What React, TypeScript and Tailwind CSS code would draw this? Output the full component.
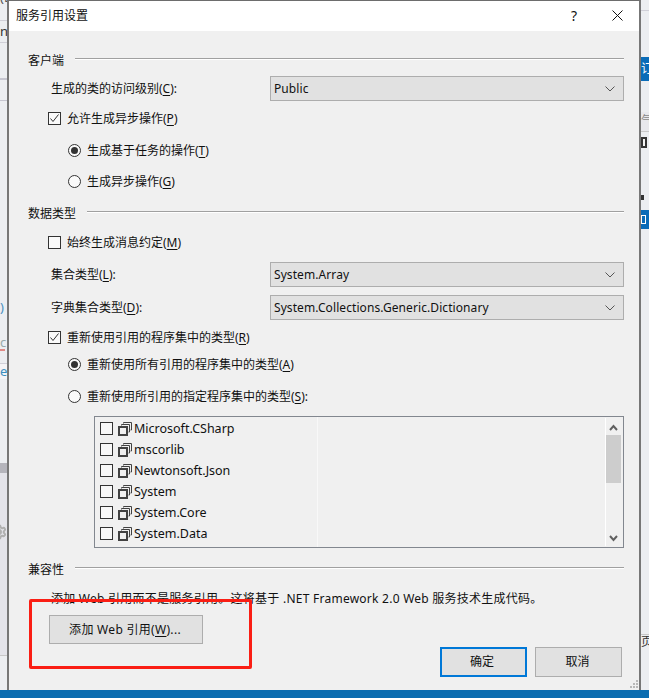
import { Settings } from "lucide-react";

const font = "font-['Noto_Sans','Noto_Sans_CJK_SC',sans-serif]";

function Key({ children }: { children: string }) {
  return <span className="underline underline-offset-2">{children}</span>;
}

function Section({ title, className }: { title: string; className: string }) {
  return (
    <div className={`flex h-5 items-center gap-[11px] ${className}`}>
      <span className="pt-[2px]">{title}</span>
      <div className="mb-[2px] h-[2px] flex-1 border-y border-t-[#a0a0a0] border-b-white" />
    </div>
  );
}

function Check({ checked, className, children }: { checked?: boolean; className: string; children: React.ReactNode }) {
  return (
    <div className={`ml-5 flex h-[21px] items-center gap-[6px] ${className}`}>
      <div className="flex h-[13px] w-[13px] items-center justify-center border border-[#333] bg-[#fafafa]">
        {checked && (
          <svg width="11" height="11" viewBox="0 0 11 11" fill="none" stroke="#333" strokeWidth="1">
            <path d="M1.5 5.5 4 8.5 9.5 1.5" />
          </svg>
        )}
      </div>
      <span>{children}</span>
    </div>
  );
}

function Radio({ checked, className, children }: { checked?: boolean; className: string; children: React.ReactNode }) {
  return (
    <div className={`ml-10 flex h-[21px] items-center gap-[6px] ${className}`}>
      <div className="flex h-[13px] w-[13px] items-center justify-center rounded-full border border-[#333] bg-[#fafafa]">
        {checked && <div className="h-[7px] w-[7px] rounded-full bg-[#333]" />}
      </div>
      <span>{children}</span>
    </div>
  );
}

function Select({ label, value, className }: { label: React.ReactNode; value: string; className: string }) {
  return (
    <div className={`ml-[23px] flex h-[25px] items-center ${className}`}>
      <span className="w-[219px]">{label}</span>
      <div className="flex h-full flex-1 items-center justify-between border border-[#adadad] bg-[#e1e1e1] pl-[3px] pr-2">
        <span className="tracking-[0.08px]">{value}</span>
        <svg width="10" height="6" viewBox="0 0 10 6" fill="none" stroke="#555" strokeWidth="1">
          <path d="M.5 .5 5 5 9.5 .5" />
        </svg>
      </div>
    </div>
  );
}

function Assembly() {
  return (
    <svg width="14" height="14" viewBox="0 0 14 14" fill="none" className="shrink-0">
      <path d="M3.5 3.5V2.5H11.5V10H10.5" stroke="#424242" />
      <path d="M5.5 1.5V.5H13.5V8H12.5" stroke="#424242" />
      <rect x="1" y="5" width="8" height="8" stroke="#424242" strokeWidth="2" />
    </svg>
  );
}

const assemblies = ["Microsoft.CSharp", "mscorlib", "Newtonsoft.Json", "System", "System.Core", "System.Data"];

function AssemblyList() {
  return (
    <div className="ml-[66px] mt-[9px] flex h-[132px] border border-[#82878f]">
      <div className="w-[222px] pt-[1px] text-[12.5px]">
        {assemblies.map((name) => (
          <div key={name} className="flex h-[21px] items-center pl-[5px]">
            <div className="h-[13px] w-[13px] border border-[#333] bg-[#f8f8f8]" />
            <div className="ml-[5px] mr-[2px]">
              <Assembly />
            </div>
            <span className="pt-[2px]">{name}</span>
          </div>
        ))}
      </div>
      <div className="w-px bg-[#f8f8f8]" />
      <div className="flex-1" />
      <Scrollbar />
    </div>
  );
}

function Scrollbar() {
  return (
    <div className="my-[1px] flex w-[18px] flex-col items-center border-l border-white pr-[2px]">
      <svg width="9" height="7" viewBox="0 0 9 7" fill="none" stroke="#606060" strokeWidth="2" className="mt-[6px] mb-[4px]">
        <path d="M1 6 4.5 2 8 6" />
      </svg>
      <div className="h-[48px] w-full bg-[#cdcdcd]" />
      <svg width="9" height="7" viewBox="0 0 9 7" fill="none" stroke="#606060" strokeWidth="2" className="mt-auto mb-[4px]">
        <path d="M1 1 4.5 5 8 1" />
      </svg>
    </div>
  );
}

function LeftEdge() {
  return (
    <div className="flex w-[7px] shrink-0 flex-col overflow-hidden bg-[#eceef1] text-[13px] leading-none text-[#555]">
      <div className="h-[21px] border-b border-[#d0d0d8]">
        <div className="-mt-[9px]">(E</div>
      </div>
      <div className="h-[22px] border-b border-[#d0d0d8] pt-[4px] text-[#333]">n</div>
      <div className="h-[37px] border-b-2 border-[#c6c6d0]" />
      <div className="h-[21px] border-b border-[#c6c6d0]" />
      <div className="mt-[200px] h-[13px] text-[#4a90c0]">)</div>
      <div className="mt-[22px] h-[13px] text-[#9aa]">c</div>
      <div className="h-[2px] w-[5px] bg-[#e08a86]" />
      <div className="mt-[12px] h-[16px] border-t border-[#d0d0d8] bg-[#f4f4f6] pt-px text-[#3a8fc0]">e</div>
      <div className="mt-[84px] h-[10px] bg-[#b5b5bc]" />
      <div className="flex h-[182px] flex-col bg-[#e4e4ea]">
        <Settings size={16} strokeWidth={3} className="ml-[-9px] mt-[51px] text-[#b0b0b0]" />
      </div>
      <div className="flex-1 border-t border-[#c8c8c8]" />
    </div>
  );
}

function RightEdge() {
  return (
    <div className="flex w-[8px] shrink-0 flex-col overflow-hidden bg-[#eceef1] text-[12px] leading-none">
      <div className="h-[11px] border-b border-[#d0d0d8]" />
      <div className="mt-[46px] h-[24px] bg-[#0a6cb8] pt-[6px] text-white">订</div>
      <div className="mt-[31px] h-[20px] border-b border-[#c8c8c8] bg-[#e8e8ec] pt-[3px] text-[#888]">气</div>
      <div className="mt-[5px] h-[11px] w-[6px] border-2 border-[#333] bg-[#f4f4f4]" />
      <div className="mt-[47px] h-[5px] w-[3px] bg-[#333]" />
      <div className="mt-[10px] flex h-[19px] items-center bg-[#0a6cb8]">
        <div className="h-[9px] w-[5px] border border-white" />
      </div>
      <div className="mt-[405px] flex-1 border-t border-[#c8c8c8] pt-[1px] text-[#333]">页</div>
    </div>
  );
}

export default function App() {
  return (
    <div className={`flex h-[698px] w-[649px] flex-col overflow-hidden bg-[#eceef1] text-[12px] leading-none text-[#111] ${font}`}>
      <div className="flex h-[690px]">
        <LeftEdge />
        <div className="relative flex flex-1 flex-col border border-x-2 border-b-0 border-x-[#777] border-t-[#6d6d6d] bg-[#f0f0f0]">
          <div className="flex h-[30px] shrink-0 items-center justify-between bg-white pl-[7px] pr-[16px]">
            <span>服务引用设置</span>
            <div className="flex items-center gap-[35px]">
              <span className="text-[14px]">?</span>
              <svg width="11" height="11" viewBox="0 0 11 11" stroke="#111" strokeWidth="1" className="mb-[1px]">
                <path d="M.5 .5 10.5 10.5M10.5 .5 .5 10.5" />
              </svg>
            </div>
          </div>
          <div className="flex flex-1 flex-col pl-[19px] pr-[15px]">
            <Section title="客户端" className="mt-[19px]" />
            <Select className="mt-[6px]" value="Public" label={<>生成的类的访问级别(<Key>C</Key>):</>} />
            <Check checked className="mt-[7px]">允许生成异步操作(<Key>P</Key>)</Check>
            <Radio checked className="mt-[11px]">生成基于任务的操作(<Key>T</Key>)</Radio>
            <Radio className="mt-[10px]">生成异步操作(<Key>G</Key>)</Radio>

            <Section title="数据类型" className="mt-[11px]" />
            <Check className="mt-[9px]">始终生成消息约定(<Key>M</Key>)</Check>
            <Select className="mt-[9px]" value="System.Array" label={<>集合类型(<Key>L</Key>):</>} />
            <Select className="mt-[8px]" value="System.Collections.Generic.Dictionary" label={<>字典集合类型(<Key>D</Key>):</>} />
            <Check checked className="mt-[7px]">重新使用引用的程序集中的类型(<Key>R</Key>)</Check>
            <Radio checked className="mt-[6px]">重新使用所有引用的程序集中的类型(<Key>A</Key>)</Radio>
            <Radio className="mt-[11px]">重新使用所引用的指定程序集中的类型(<Key>S</Key>):</Radio>
            <AssemblyList />

            <Section title="兼容性" className="mt-[11px]" />
            <div className="ml-[23px] mt-[9px] flex h-5 items-center pt-[1px] tracking-[0.25px]">
              添加 Web 引用而不是服务引用。这将基于 .NET Framework 2.0 Web 服务技术生成代码。
            </div>
            <button className="ml-[21px] mt-[7px] h-[29px] w-[154px] border border-[#adadad] bg-[#e1e1e1] pr-[2px] tracking-[0.3px]">
              添加 Web 引用(<Key>W</Key>)...
            </button>
            <div className="mt-[3px] flex justify-end gap-2 pr-[2px]">
              <button className="h-[30px] w-[87px] border-2 border-[#0078d7] bg-[#e1e1e1] pr-[3px]">确定</button>
              <button className="h-[30px] w-[87px] border border-[#adadad] bg-[#e1e1e1] pr-[2px]">取消</button>
            </div>
          </div>
          {/* annotation drawn on top of the screenshot */}
          <div className="absolute left-[20px] top-[598px] h-[70px] w-[223px] rounded-[2px] border-[3px] border-[#fa1e14]" />
          {/* resize grip */}
          <svg width="9" height="9" viewBox="0 0 9 9" fill="#b8b8b8" className="absolute bottom-[1px] right-0">
            <rect x="6" y="0" width="2" height="2" />
            <rect x="3" y="3" width="2" height="2" />
            <rect x="6" y="3" width="2" height="2" />
            <rect x="0" y="6" width="2" height="2" />
            <rect x="3" y="6" width="2" height="2" />
            <rect x="6" y="6" width="2" height="2" />
          </svg>
        </div>
        <RightEdge />
      </div>
      <div className="h-2 bg-[#0a6cb0]" />
    </div>
  );
}
